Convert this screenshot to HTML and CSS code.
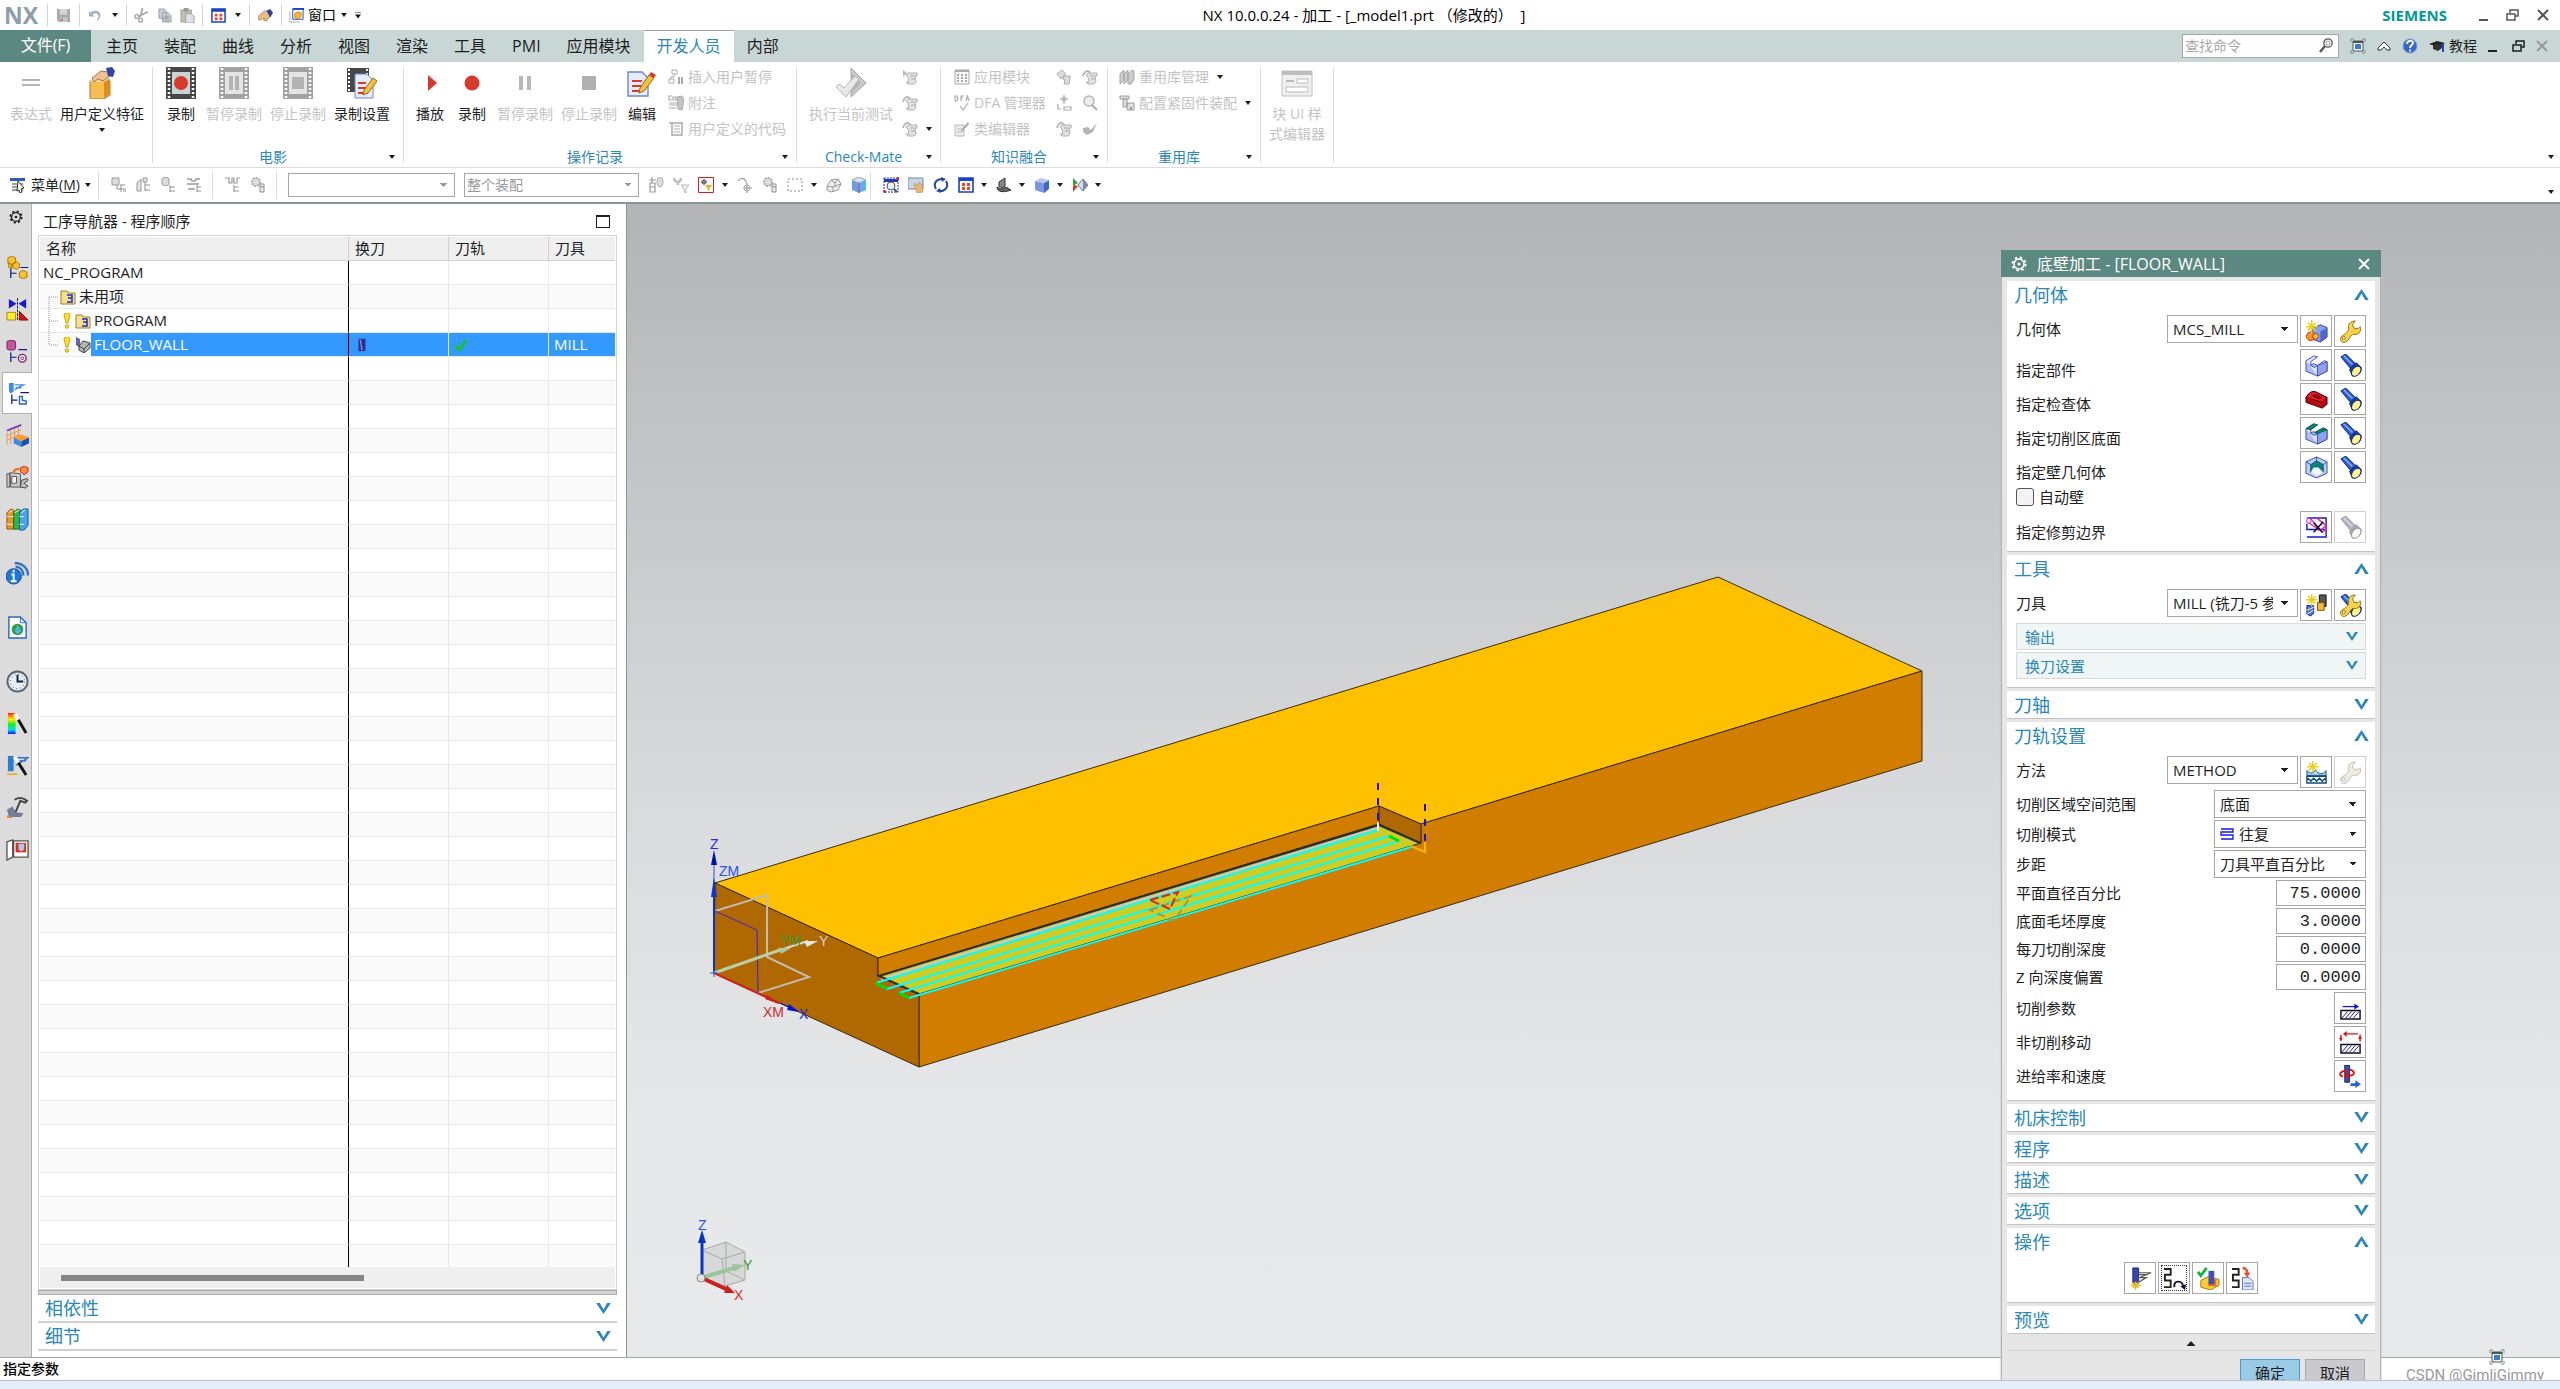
FILE: index.html
```html
<!DOCTYPE html>
<html lang="zh-CN">
<head>
<meta charset="utf-8">
<title>NX 10.0.0.24 - 加工</title>
<link rel="stylesheet" href="styles.css">
</head>
<body>
<svg class="sprite" aria-hidden="true">
  <symbol id="save" viewBox="0 0 16 16"><path d="M1 1h14v14H3l-2-2z" fill="#a9a9ae"/><path d="M4 1h8v6H4z" fill="#d4d4d8"/><path d="M4 10h8v5H4z" fill="#c5c5ca"/><path d="M5 11h2v3H5z" fill="#8b8b90"/></symbol>
  <symbol id="undo" viewBox="0 0 16 16"><path d="M1 3v6h6L5 7c3-3 7-1 6 3l-2 4c6-3 6-12-2-11-2 0-3 1-4 2z" fill="#a9b1bd"/></symbol>
  <symbol id="cut" viewBox="0 0 16 16"><path d="M9 0 7 9M15 4 5 9" stroke="#aaa" stroke-width="2"/><circle cx="3" cy="9" r="2" fill="none" stroke="#aaa" stroke-width="1.5"/><circle cx="7" cy="13" r="2" fill="none" stroke="#aaa" stroke-width="1.5"/></symbol>
  <symbol id="copy" viewBox="0 0 16 16"><path d="M2 1h6l2 3v7H2zM6 5h6l3 3v7H6z" fill="#c9ccd3" stroke="#9b9fa8"/><path d="M8 9h5M8 11h5M8 13h5" stroke="#9b9fa8"/></symbol>
  <symbol id="paste" viewBox="0 0 16 16"><path d="M1 2h11v13H1z" fill="#c3bfb2" stroke="#a4a196"/><path d="M4 0h5v4H4z" fill="#999"/><path d="M6 6h6l3 3v7H6z" fill="#dfe1e5" stroke="#9b9fa8"/></symbol>
  <symbol id="grid" viewBox="0 0 16 16"><path d="M1 1h14v14H1z" fill="#fff" stroke="#1743c4" stroke-width="1.6"/><path d="M1 1h14v3H1z" fill="#1743c4"/><path d="M4 6h3v3H4zM9 6h3v3H9zM4 10h3v3H4zM9 10h3v3H9z" fill="#e8452c"/></symbol>
  <symbol id="hand" viewBox="0 0 16 16"><path d="M0 9 7 3l5 1 1 5-4 5-3-1 1-2-6 2z" fill="#e8bd84" stroke="#9c7442" stroke-width=".7"/><path d="m9 3 4-2 3 4-3 5z" fill="#2b3fa8"/></symbol>
  <symbol id="wincube" viewBox="0 0 16 16"><path d="M1 4v11h11" fill="none" stroke="#555" stroke-dasharray="1 1"/><path d="M4 1h11v11H4z" fill="#fff" stroke="#1743c4"/><path d="M4 0h12v2H4z" fill="#1743c4"/><path d="m6 6 3-2 4 1v4l-3 3-4-2z" fill="#f5b52e" stroke="#b37400" stroke-width=".7"/></symbol>
  <symbol id="restore" viewBox="0 0 13 13"><path d="M4 4V1h8v6H9M1 5h8v6H1z" fill="none" stroke="currentColor" stroke-width="1.5"/></symbol>
  <symbol id="close" viewBox="0 0 12 12"><path d="m1 1 10 10M11 1 1 11" stroke="currentColor" stroke-width="2"/></symbol>
  <symbol id="search" viewBox="0 0 16 16"><circle cx="10" cy="5" r="4.2" fill="none" stroke="#555" stroke-width="1.3"/><circle cx="10" cy="5" r="2" fill="none" stroke="#999"/><path d="m7 8-5 6" stroke="#555" stroke-width="2.4"/></symbol>
  <symbol id="full" viewBox="0 0 16 16"><path d="M1 4V1h3M12 1h3v3M15 12v3h-3M4 15H1v-3" fill="none" stroke="#7d8a88"/><path d="M3 3h10v10H3z" fill="#f4f6f8" stroke="#4a5258"/><path d="M3 3h10v2H3z" fill="#4a5258"/><path d="M5 6h6v5H5z" fill="#3c79c8"/></symbol>
  <symbol id="upup" viewBox="0 0 14 14"><path d="m1 9 6-6 6 6v2h-3L7 8l-3 3H1z" fill="#fff" stroke="#333"/></symbol>
  <symbol id="help" viewBox="0 0 16 16"><circle cx="8" cy="8" r="7" fill="#3566c8" stroke="#7d9cdd"/><path d="M5 6c0-4 6-4 6-1 0 2-3 2-3 5M8 11.500v2" fill="none" stroke="#fff" stroke-width="1.8"/></symbol>
  <symbol id="cap" viewBox="0 0 16 16"><path d="m0 6 8-3 8 2-7 4z" fill="#222"/><path d="M4 7v4l5 2 4-3V6z" fill="#333"/><path d="M14 6v8" stroke="#1730d0" stroke-width="1.8"/></symbol>

  <symbol id="equals" viewBox="0 0 32 32"><path d="M7 12h18v2H7zM7 17h18v2H7z" fill="#b5b5b5"/></symbol>
  <symbol id="userfeat" viewBox="0 0 32 32"><path d="m4 14 15-3 5 3v14l-6 4H4z" fill="#f6bd52" stroke="#b3791d"/><path d="m4 14 5-3h15l-6 4H4z" fill="#fbdc9a"/><path d="m18 15 6-3v15l-6 4z" fill="#d98d1c"/><path d="m6 11 9-7 7 1 2 4-7 5-5-2-4 3z" fill="#edc290" stroke="#a17546"/><path d="m20 1 6-1 3 4-2 6-5-1z" fill="#3442ad"/></symbol>
  <symbol id="film" viewBox="0 0 32 32"><path d="M1 0h30v32H1z" fill="#474747"/><path d="M4 1v30M28 1v30" stroke="#fff" stroke-width="2.500" stroke-dasharray="2 2"/><path d="M7 5h18v22H7z" fill="#c9d4d4"/><circle cx="16" cy="16" r="7" fill="#d8392b"/></symbol>
  <symbol id="filmoff" viewBox="0 0 32 32"><path d="M1 0h30v32H1z" fill="#a2a2a2"/><path d="M4 1v30M28 1v30" stroke="#fff" stroke-width="2.500" stroke-dasharray="2 2"/><path d="M7 5h18v22H7z" fill="#e4e4e4"/></symbol>
  <symbol id="filmpause" viewBox="0 0 32 32"><use href="#filmoff"/><path d="M11 9h4v14h-4zM17 9h4v14h-4z" fill="#b3b3b3"/></symbol>
  <symbol id="filmstop" viewBox="0 0 32 32"><use href="#filmoff"/><path d="M10 10h12v12H10z" fill="#b3b3b3"/></symbol>
  <symbol id="doc" viewBox="0 0 32 32"><path d="M2 5h14l6 6v18H2z" fill="#e6ecfa" stroke="#6f86c9" stroke-width="1.4"/><path d="M6 14h10M6 19h12M6 24h10" stroke="#d8392b" stroke-width="2"/><path d="m14 21 9-13 5 3-10 13-5 2z" fill="#f3c33c" stroke="#8d6a16"/><path d="m23 8 2-3 5 3-2 3z" fill="#d8392b"/></symbol>
  <symbol id="filmset" viewBox="0 0 32 32"><path d="M1 1h22v24H1z" fill="#474747"/><path d="M3 2v22M21 2v6" stroke="#fff" stroke-width="2" stroke-dasharray="2 2"/><path d="M9 7h12l6 6v18H9z" fill="#e6ecfa" stroke="#6f86c9"/><path d="M12 16h8M12 21h9M12 26h9" stroke="#d8392b" stroke-width="2"/><path d="m18 23 9-12 4 3-9 12-5 2z" fill="#f3c33c" stroke="#8d6a16"/></symbol>
  <symbol id="play" viewBox="0 0 32 32"><path d="m14 8 9 8-9 8z" fill="#d8392b"/></symbol>
  <symbol id="rec" viewBox="0 0 32 32"><circle cx="16" cy="16" r="7.500" fill="#d8392b"/></symbol>
  <symbol id="pause" viewBox="0 0 32 32"><path d="M10 9h4v14h-4zM18 9h4v14h-4z" fill="#b8b8b8"/></symbol>
  <symbol id="stop" viewBox="0 0 32 32"><path d="M9 9h14v14H9z" fill="#b0b0b0"/></symbol>
  <symbol id="test" viewBox="0 0 32 32"><path d="m16 1 15 15-15 14z" fill="#c9c9c9" stroke="#a8a8a8"/><path d="M16 6v20l10-10z" fill="#b4b4b4"/><path d="m1 20 3-3 5 4L20 9l4 3-13 18z" fill="#e9e9e9" stroke="#b5b5b5"/></symbol>
  <symbol id="blockui" viewBox="0 0 32 32"><path d="M1 4h30v25H1z" fill="#f0f0f0" stroke="#c2c2c2"/><path d="M1 4h30v4H1z" fill="#bdbdbd"/><path d="M5 14h8" stroke="#bbb" stroke-width="2"/><path d="M16 12h11v4H16zM5 20h22v5H5z" fill="#fff" stroke="#bbb"/></symbol>

  <symbol id="g-pause" viewBox="0 0 16 16"><path d="M4 1h5v4H4zM1 10h5v4H1zM6 5v3H3v2" fill="none" stroke="#aaa"/><path d="M10 8h2v7h-2zM13 8h2v7h-2z" fill="#aaa"/></symbol>
  <symbol id="g-note" viewBox="0 0 16 16"><path d="M4 1H1v4h3M5 2h3v3H5zM1 8h9M1 10h9M1 13h8" fill="none" stroke="#aaa" stroke-width="1.200"/><path d="m9 2 5-1 2 3-2 11-4-1V9z" fill="#c4c4c4" stroke="#aaa"/></symbol>
  <symbol id="g-code" viewBox="0 0 16 16"><path d="M1 2h14M4 2v12h10V2" fill="none" stroke="#aaa" stroke-width="1.500"/><path d="M6 5h6M6 8h6M6 11h6" stroke="#aaa"/></symbol>
  <symbol id="g-run" viewBox="0 0 16 16"><path d="m1 1 4 3-4 4z" fill="#bbb"/><path d="M6 4h9v3h-2l1 6-2 2H6l-2-2h3L6 8 4 6z" fill="#e2e2e2" stroke="#b0b0b0"/><path d="M8 7h4M9 10h4" stroke="#aaa"/></symbol>
  <symbol id="g-up" viewBox="0 0 16 16"><path d="M1 7c2-7 8-6 7-1" fill="none" stroke="#bbb" stroke-width="2"/><path d="M6 4h9v3h-2l1 6-2 2H6l-2-2h3L6 8 4 6z" fill="#e2e2e2" stroke="#b0b0b0"/><path d="M8 7h4M9 10h4" stroke="#aaa"/></symbol>
  <symbol id="g-grid" viewBox="0 0 16 16"><path d="M1 1h14v14H1z" fill="#f6f6f6" stroke="#aaa"/><path d="M1 2h14" stroke="#aaa" stroke-width="2"/><path d="M3 6h2M7 6h2M11 6h2M3 9h2M7 9h2M11 9h2M3 12h2M7 12h2M11 12h2" stroke="#aaa" stroke-width="2"/></symbol>
  <symbol id="g-dfa" viewBox="0 0 16 16"><path d="M1 1v5h2l1-2-1-3zM7 6V1h3M7 3h2M12 6l1.500-5L15 6M6 11l3 4 5-7" fill="none" stroke="#aaa" stroke-width="1.200"/></symbol>
  <symbol id="g-edit" viewBox="0 0 16 16"><path d="M1 4h9v11H1zM3 8h5M3 11h5" fill="#eee" stroke="#b8b8b8"/><path d="m7 9 7-8 1 2-7 8z" fill="#aaa"/></symbol>
  <symbol id="g-tag" viewBox="0 0 16 16"><path d="m1 5 5-4 4 4-5 5z" fill="#ddd" stroke="#b0b0b0"/><path d="M7 7h7v3l-1 5H8l1-4-2-1z" fill="#ddd" stroke="#aaa"/></symbol>
  <symbol id="g-target" viewBox="0 0 16 16"><path d="M8 0v9M4 4h8M2 9v5h3M8 12h7v3H8z" fill="none" stroke="#aaa" stroke-width="1.200"/><circle cx="8" cy="4" r="2" fill="none" stroke="#aaa"/></symbol>
  <symbol id="g-find" viewBox="0 0 16 16"><circle cx="7" cy="6" r="5" fill="#eee" stroke="#b5b5b5" stroke-width="1.500"/><path d="m10 10 5 5" stroke="#aaa" stroke-width="2"/></symbol>
  <symbol id="g-brush" viewBox="0 0 16 16"><path d="m1 7 5-1 3 3 6-7-4 9-6 3-4-3z" fill="#b5b5b5"/></symbol>
  <symbol id="g-books" viewBox="0 0 16 16"><path d="m1 5 4-4v10l-4 4zM5 5l4-4v10l-4 4zM9 5l4-4 2 1v9l-3 4H9z" fill="#ccc" stroke="#a5a5a5"/></symbol>
  <symbol id="g-bolt" viewBox="0 0 16 16"><path d="M1 1h9v3H1zM4 4v8h4V4zM8 8h7v7H8z" fill="#ddd" stroke="#9f9f9f"/><path d="M11 12h2v3h-2z" fill="#999"/></symbol>
  <symbol id="menu" viewBox="0 0 16 16"><path d="M0 1h15v3H0z" fill="#2d5bc0"/><path d="M2 6h12v9H2z" fill="#eee"/><path d="M2 7h11M2 10h11M2 13h11" stroke="#888" stroke-width="1.500"/><path d="m8 4 6 7-3 1 1 3-2 1-1-3-2 1z" fill="#fff" stroke="#333"/></symbol>
  <symbol id="g-tree" viewBox="0 0 16 16"><path d="M1 1h7v7H1z" fill="#ddd" stroke="#999"/><path d="M6 8v4h4M10 7v8M10 8h4M10 12h5M12 14h3" fill="none" stroke="#8f8f8f"/></symbol>
  <symbol id="g-tree2" viewBox="0 0 16 16"><path d="M1 14V6l4-4v12zM7 1h4v4H7z" fill="#e5e5e5" stroke="#999"/><path d="M9 5v9M9 8h5M9 13h5" fill="none" stroke="#8f8f8f"/></symbol>
  <symbol id="g-cyl" viewBox="0 0 16 16"><path d="M1 2c0-2 7-2 7 0v5c0 2-7 2-7 0z" fill="#ddd" stroke="#999"/><path d="M9 8v7M9 10h5M9 14h5" stroke="#8f8f8f"/></symbol>
  <symbol id="g-tool" viewBox="0 0 16 16"><path d="M1 2h4l1 2h3l1-2h4M1 7h12M2 12h7" fill="none" stroke="#999" stroke-width="1.400"/><path d="M11 8v7M11 10h4M11 14h4" stroke="#8f8f8f"/></symbol>
  <symbol id="g-y" viewBox="0 0 16 16"><path d="M0 1h4v5h3V1h2v5h3V1h3M9 8v7M9 10h5M9 14h5" fill="none" stroke="#999" stroke-width="1.200"/></symbol>
  <symbol id="g-gear" viewBox="0 0 16 16"><circle cx="6" cy="5" r="4" fill="#ddd" stroke="#aaa" stroke-dasharray="2 1" stroke-width="2"/><path d="M10 7h4v8h-4zM10 10h4" fill="#eee" stroke="#8f8f8f"/></symbol>
  <symbol id="g-box" viewBox="0 0 16 16"><path d="M2 6h5v9H2zM2 10h5M4 0v6M1 3h7" fill="none" stroke="#999" stroke-width="1.200"/><ellipse cx="12" cy="5" rx="3" ry="5" fill="#ddd" stroke="#aaa"/></symbol>
  <symbol id="g-filter" viewBox="0 0 16 16"><path d="M1 1c0 5 7 5 7 0M5 4v4" fill="none" stroke="#bbb" stroke-width="2.400"/><path d="M8 8h8l-3 4v4l-2-1v-3z" fill="#eee" stroke="#bbb"/></symbol>
  <symbol id="filter" viewBox="0 0 16 16"><path d="M.5.5h15v15H.5z" fill="#fff" stroke="#c22"/><path d="M6 2v6M3 5h6" stroke="#555"/><circle cx="6" cy="5" r="2" fill="none" stroke="#555"/><path d="M7 8h7l-2.500 3v3l-2-1v-2z" fill="#f0a818"/></symbol>
  <symbol id="g-rot" viewBox="0 0 16 16"><path d="M1 4c3-4 8-3 8 2M6 11h9M10 6v10" fill="none" stroke="#999" stroke-width="1.200"/><circle cx="10" cy="11" r="3" fill="none" stroke="#aaa"/></symbol>
  <symbol id="g-dash" viewBox="0 0 16 16"><path d="M1 2h14v12H1z" fill="none" stroke="#888" stroke-dasharray="2 2"/></symbol>
  <symbol id="g-cube" viewBox="0 0 16 16"><path d="m1 9 4-6 7-1 3 5-3 6-7 2-4-2z" fill="#eee" stroke="#999"/><path d="m1 9 6 1 8-3M7 10v5M5 3l4 3 3-4M9 6v4" fill="none" stroke="#999"/></symbol>
  <symbol id="cube2" viewBox="0 0 16 16"><path d="m1 3 7 3v10l-7-3z" fill="#6f9fe0"/><path d="m8 6 7-3v10l-7 3z" fill="#52b4f4"/><path d="m1 3 7-3 7 3-7 3z" fill="#d5e3f5" stroke="#9ab"/><path d="M8 6v10" stroke="#d36"/></symbol>
  <symbol id="zoomfit" viewBox="0 0 16 16"><path d="M1 1h14v14H1z" fill="none" stroke="#1b2fc0" stroke-dasharray="2 1"/><path d="M1 2h14v3H1z" fill="#2438b8"/><circle cx="8" cy="9" r="4" fill="#e9f1f5" stroke="#555"/><path d="m11 12 3 3" stroke="#555" stroke-width="2"/><circle cx="15" cy="1.500" r="1.500" fill="#d22"/><circle cx="1.500" cy="14.500" r="1.500" fill="#d22"/></symbol>
  <symbol id="pan" viewBox="0 0 16 16"><path d="M0 1h15v11H0z" fill="#c9d6e6" stroke="#789"/><path d="m6 8 1-2 3 3 1-4 3 3 1 7-6 1z" fill="#e6b778" stroke="#b98a4a" stroke-width=".6"/></symbol>
  <symbol id="spin" viewBox="0 0 16 16"><path d="M3 12C0 7 3 2 9 2M13 4c3 5 0 10-6 10" fill="none" stroke="#23499c" stroke-width="2"/><path d="m8 0 5 2-4 3zM8 16l-5-2 4-3z" fill="#23499c"/></symbol>
  <symbol id="shade" viewBox="0 0 16 16"><path d="M3 9V5l6-4v8l-3 2z" fill="#888" stroke="#333"/><path d="M1 10c0 5 6 6 14 3l-5-3-4 2c-2 0-3-2-5-2z" fill="#666" stroke="#333"/></symbol>
  <symbol id="bluecube" viewBox="0 0 16 16"><path d="m1 4 9 2v10l-9-3z" fill="#7b97e2"/><path d="m10 6 5-3v9l-5 4z" fill="#4564c6"/><path d="m1 4 6-3 8 2-5 3z" fill="#b5c5f2"/></symbol>
  <symbol id="snap" viewBox="0 0 16 16"><path d="m1 1 5 5-5 3z" fill="#2ca53a"/><path d="m1 8 5 1-5 6z" fill="#d8392b"/><path d="m6 8 5-6 5 6-5 6z" fill="#d7dbe8" stroke="#6c7594"/><path d="m11 2 5 6-5 6z" fill="#7c87ad"/></symbol>

  <symbol id="gear" viewBox="0 0 16 16"><circle cx="8" cy="8" r="5" fill="none" stroke="currentColor" stroke-width="1.500"/><circle cx="8" cy="8" r="6.500" fill="none" stroke="currentColor" stroke-width="2" stroke-dasharray="2.500 2.600"/><circle cx="8" cy="8" r="1.500" fill="currentColor"/></symbol>
  <symbol id="r-asm" viewBox="0 0 24 24"><path d="m2 2 4-2 4 2v5l-4 2-4-2zM2 7l4 2v4l-3-1zM7 8l4-2 3 2v4l-3 2-4-2z" fill="#f7c22f" stroke="#a97800"/><path d="M15 12h8M5 13v10M5 18h6" stroke="#111a80" stroke-width="1.300"/><path d="m14 17 4-2 4 2v5l-4 2-4-2z" fill="#f7c22f" stroke="#a97800"/></symbol>
  <symbol id="r-con" viewBox="0 0 24 24"><path d="m3 1 8 5-8 5zM21 1l-8 5 8 5z" fill="#1818d8"/><path d="M12 0v24" stroke="#222" stroke-dasharray="3 1"/><path d="M1 15h9v8H1z" fill="#ffee2e" stroke="#a80"/><path d="M14 14v9h9z" fill="#d81818" stroke="#700"/></symbol>
  <symbol id="r-part" viewBox="0 0 24 24"><path d="M1 2c0-2 9-2 9 0v7c0 2-9 2-9 0z" fill="#c2559c" stroke="#7a1f5c"/><path d="M13 10h9M5 13v10M5 18h6" stroke="#111a80" stroke-width="1.300"/><circle cx="17" cy="19" r="4" fill="#fff" stroke="#8a2070" stroke-width="1.500"/><circle cx="17" cy="19" r="1.500" fill="none" stroke="#8a2070"/></symbol>
  <symbol id="r-op" viewBox="0 0 24 24"><path d="M2 1h5v9l-3 2-2-2z" fill="#3e8de0"/><path d="M8 8 17 3H8M9 6h6" fill="none" stroke="#3e8de0" stroke-width="1.500"/><path d="M14 11h9M5 13v10M5 19h6" stroke="#111a80" stroke-width="1.300"/><path d="M13 15v8h7v-3l-4-1v-4z" fill="#fff" stroke="#2763c4" stroke-width="1.500"/></symbol>
  <symbol id="r-feat" viewBox="0 0 24 24"><path d="M1 9v13M5 7v14M9 5v14M13 3v12M1 12l15-6M1 17l13-6" stroke="#e9964a" fill="none"/><path d="m1 7 15-6" stroke="#7342b5" stroke-width="2"/><path d="m8 14 8-3 8 3-8 4z" fill="#ff9d28"/><path d="m8 14 8 4v6l-8-4z" fill="#3b8be0"/><path d="m16 18 8-4v6l-8 4z" fill="#1a4fb0"/></symbol>
  <symbol id="r-mach" viewBox="0 0 24 24"><path d="M1 8h3v14H1zM4 7l11 1v14H5z" fill="#c8c8c8" stroke="#555"/><path d="M6 11h5v7H6z" fill="#f4f4f4" stroke="#555"/><path d="m16 15 6-2 1 2-4 3 4 3-3 2-5-1z" fill="#bbb" stroke="#444"/><path d="m15 2 4-2 4 2v4l-4 3-4-3z" fill="#fd8d3c" stroke="#b22"/><path d="M14 3c-4 0-6 2-6 4" fill="none" stroke="#f07020" stroke-width="2.500"/></symbol>
  <symbol id="r-books" viewBox="0 0 24 24"><path d="m1 5 4-4 3 1v20H1z" fill="#f09226" stroke="#9a5200"/><path d="m8 5 4-4 3 1v20H8z" fill="#2dbb3c" stroke="#0b6b15"/><path d="m14 5 4-4h5v17l-4 5h-5z" fill="#4aa2ea" stroke="#125a9c"/><path d="M3 5l4-3M9 5l5-3M16 5l4-3M1 9h7M14 9h5M1 17h6M14 17h5" stroke="#fff"/></symbol>
  <symbol id="r-info" viewBox="0 0 24 24"><circle cx="8" cy="15" r="8" fill="#1f77d8" stroke="#0d4a9c"/><path d="M8 8v3M5.500 13H8v7M5 20h6" stroke="#fff" stroke-width="2" fill="none"/><path d="M10 5c5 0 8 4 8 9M9 1c8 0 14 5 14 13" fill="none" stroke="#3571c8" stroke-width="2.500"/></symbol>
  <symbol id="r-web" viewBox="0 0 24 24"><path d="M3 1h12l6 6v16H3z" fill="#fff" stroke="#2867c6" stroke-width="1.500"/><path d="M15 1v6h6" fill="none" stroke="#2867c6"/><circle cx="12" cy="14" r="6" fill="#2da03a"/><path d="m12 9 4 7-4 3-3-3z" fill="#4fb4ee"/></symbol>
  <symbol id="r-clock" viewBox="0 0 24 24"><circle cx="12" cy="12" r="10.500" fill="#e4effa" stroke="#5c656e" stroke-width="2"/><circle cx="12" cy="12" r="7.500" fill="none" stroke="#345" stroke-dasharray="1 3"/><path d="M12 5v7h6" fill="none" stroke="#123" stroke-width="2"/></symbol>
  <linearGradient id="spec" x2="0" y2="1"><stop stop-color="#f20"/><stop offset=".3" stop-color="#fe0"/><stop offset=".55" stop-color="#1e2"/><stop offset=".8" stop-color="#0de"/><stop offset="1" stop-color="#11f"/></linearGradient>
  <symbol id="r-spec" viewBox="0 0 24 24"><path d="M2 1h8v22H2z" fill="url(#spec)"/><path d="m11 5 10 17" stroke="#111" stroke-width="3"/><path d="m9 2 4 6" stroke="#fff" stroke-width="4"/></symbol>
  <symbol id="r-wiz" viewBox="0 0 24 24"><path d="M2 2h6v16H2z" fill="#2c7fd0"/><path d="M10 12 23 4H10M9 7h12" fill="none" stroke="#3571c8" stroke-width="1.500"/><path d="m11 6 10 16" stroke="#111" stroke-width="3"/><path d="m9 3 4 6" stroke="#fff" stroke-width="4"/><path d="M1 21h11" stroke="#e9b52a" stroke-width="2"/></symbol>
  <symbol id="r-hammer" viewBox="0 0 24 24"><path d="M9 4c4-3 8-3 13 1l-2 2-5-2-6 14" fill="none" stroke="#444" stroke-width="2"/><path d="m1 14 6-3 3 6 8 1-2 4H3z" fill="#777b98"/><path d="m1 20 6 3H1z" fill="#f08a20"/></symbol>
  <symbol id="r-role" viewBox="0 0 24 24"><path d="m1 4 6-2v18l-6 3zM8 3h15v17H8z" fill="#fff" stroke="#555" stroke-width="1.400"/><path d="M10 5h11v10H10z" fill="#e32d1c"/><path d="M13 6h6v6l-3 2-3-2z" fill="#a6c8ee"/></symbol>

  <symbol id="t-folder" viewBox="0 0 16 16"><path d="M1 2h6l1 2h7v11H1z" fill="#f7e08a" stroke="#9b8129"/><path d="M7 6h5v3H8M12 9v4H7" fill="none" stroke="#1530d0" stroke-width="1.500"/></symbol>
  <symbol id="t-warn" viewBox="0 0 8 16"><path d="M1 2c0-3 6-3 6 0L5 10H3z" fill="#ffe11f" stroke="#a98a00" stroke-width=".7"/><circle cx="4" cy="13.500" r="1.800" fill="#ffe11f" stroke="#a98a00" stroke-width=".7"/></symbol>
  <symbol id="t-mill" viewBox="0 0 16 16"><path d="m1 0 4 2v9l-4-3z" fill="#5f69a6"/><path d="m4 9 4-5 7 2v5l-6 5-5-3z" fill="#b5b5b5" stroke="#444"/><path d="m4 9 5 3 6-6M9 12v4" fill="none" stroke="#444"/></symbol>
  <symbol id="t-cutter" viewBox="0 0 8 16"><path d="M0 1h8v14H0z" fill="#2b3192"/><path d="m2 2 2 12" stroke="#8d97d8" stroke-width="1.500"/></symbol>
  <symbol id="t-ok" viewBox="0 0 12 14"><path d="m1 7 3 5L11 2" fill="none" stroke="#18c03a" stroke-width="3"/></symbol>

  <symbol id="down" viewBox="0 0 16 12"><path d="m0 0h4l4 7 4-7h4l-8 12z" fill="#2a87b8"/></symbol>
  <symbol id="up" viewBox="0 0 16 12"><path d="m0 12h4l4-7 4 7h4l-8-12z" fill="#2a87b8"/></symbol>

  <symbol id="d-geo" viewBox="0 0 24 24"><path d="m8 9 8-4 7 3v10l-7 5-8-3z" fill="#86a0f0" stroke="#2a3b9a"/><path d="M16 12v11l7-5V8z" fill="#4c66d4"/><circle cx="6" cy="17" r="4.500" fill="#ff9130" stroke="#b30"/><circle cx="11" cy="17" r="3" fill="#ffc04a" stroke="#b30"/><path d="M7 0v14M1 7h12M3 3l8 8M11 3l-8 8" stroke="#e8cf1a" stroke-width="1.600"/></symbol>
  <symbol id="d-wrench" viewBox="0 0 24 24"><path d="M10 9c-1-5 2-8 7-8l-3 4 2 4 4 0 2-2c2 5-2 9-7 8-3 0-4 6-8 8-3 2-7-2-5-5 2-3 8-4 8-9z" fill="#f9d44a" stroke="#8f6f10"/><circle cx="5" cy="19" r="1.600" fill="#fff" stroke="#8f6f10"/></symbol>
  <symbol id="d-torch" viewBox="0 0 24 24"><path d="m2 3 5-3 10 10-5 5z" fill="#2b5fd8" stroke="#10246e"/><path d="m11 16 7-7 5 5c1 6-4 9-9 9z" fill="#173fae" stroke="#10246e"/><ellipse cx="18" cy="18" rx="6" ry="4" transform="rotate(-50 18 18)" fill="#fff58a" stroke="#10246e"/><path d="m5 2 9 9" stroke="#8db2ff" stroke-width="1.500"/></symbol>
  <symbol id="d-part" viewBox="0 0 24 24"><path d="M1 7v11l12 5V12l-4-2-4 2V8z" fill="#aebcf6" stroke="#3d4fb8"/><path d="m1 7 8-5 4 1-7 5v4l4 2 3-2 7-5 3 1v10l-10 5" fill="#dfe5fe" stroke="#3d4fb8"/><path d="m13 12 10-4v10l-10 5z" fill="#8ea1ee" stroke="#3d4fb8"/></symbol>
  <symbol id="d-check" viewBox="0 0 24 24"><path d="M1 10c3-5 6-7 10-6l12 6v7l-5 4L1 15z" fill="#b80a14" stroke="#500"/><path d="M1 10c3-5 6-7 10-6l12 6-5 5z" fill="#e11c26" stroke="#500"/><path d="m8 8 4-1 5 3-3 1z" fill="#b80a14" stroke="#500"/></symbol>
  <symbol id="d-floor" viewBox="0 0 24 24"><use href="#d-part"/><path d="m1 7 8-5 4 1-7 5zM10 11l9-5 4 2-10 4z" fill="#0b8080" stroke="#064"/></symbol>
  <symbol id="d-wall" viewBox="0 0 24 24"><path d="m1 6 11-5 11 5v12l-11 5-11-5z" fill="#b9cdf5" stroke="#3d4fb8"/><path d="m6 9 6-4 7 4v8l-4-4H9l-3 4z" fill="#0b8080" stroke="#064"/><path d="m6 17 3-5h5l5 5-7 4z" fill="#eef5ff"/><path d="M12 1v4M1 6l5 3M23 6l-4 3" stroke="#3d4fb8"/></symbol>
  <symbol id="d-trim" viewBox="0 0 24 24"><path d="M2 2h20v20H2M2 8v6h20" fill="none" stroke="#1818c8" stroke-width="1.500"/><path d="m2 6 14 9 6-5L12 2M6 3l12 14 5-4" fill="none" stroke="#e028c8" stroke-width="1.500"/><circle cx="4" cy="5" r="2.500" fill="#fff" stroke="#e028c8"/><path d="m9 7 9 10M19 6 9 17" stroke="#111" stroke-width="1.600"/></symbol>
  <symbol id="d-newtool" viewBox="0 0 24 24"><path d="M2 12h7v8l-3 3-4-2z" fill="#4a72d8" stroke="#15308a"/><path d="m2 17 7-3M2 21l7-4" stroke="#fff"/><path d="M15 1h7v12h-7z" fill="#555" stroke="#111"/><path d="M13 9h7v8h-7z" fill="#f6b73a" stroke="#804d00"/><path d="M7 0v13M1 6h12M3 2l8 8M11 2l-8 8" stroke="#e8cf1a" stroke-width="1.500"/></symbol>
  <symbol id="d-edittool" viewBox="0 0 24 24"><use href="#d-torch"/><use href="#d-wrench"/></symbol>
  <symbol id="d-method" viewBox="0 0 24 24"><path d="M2 10c4 4 7 3 9-1 3 6 8 5 11 1v5H2z" fill="#a9d8f5" stroke="#1a5580"/><path d="M2 16h20v7H2zM3 18l3 3 3-3 3 3 3-3 3 3 3-3" fill="#fff" stroke="#154a76" stroke-width="1.500"/><path d="M8 0v12M2 6h12M4 2l8 8M12 2l-8 8" stroke="#e8cf1a" stroke-width="1.400"/></symbol>
  <symbol id="d-zig" viewBox="0 0 14 12"><path d="M1 1h12v3H1v3h12v4H1" fill="none" stroke="#1414e6" stroke-width="1.300"/></symbol>
  <symbol id="d-hatch" viewBox="0 0 24 24"><path d="M2 14h20v9H2z" fill="#fff" stroke="#111" stroke-width="1.500"/><path d="m3 22 6-7M7 22l6-7M11 22l6-7M15 22l6-7" stroke="#1a1a99"/></symbol>
  <symbol id="d-cut" viewBox="0 0 24 24"><use href="#d-hatch"/><path d="M4 10h14" stroke="#1414c8" stroke-width="1.300"/><path d="m16 7 5 3-5 3z" fill="#1414c8"/></symbol>
  <symbol id="d-noncut" viewBox="0 0 24 24"><use href="#d-hatch"/><path d="M2 10V4M6 3h14M22 11V6" stroke="#d01818" stroke-width="1.500"/><path d="m0 7 2 4 2-4zM8 0 4 3l4 3zM20 8l2-5 2 5z" fill="#d01818"/></symbol>
  <symbol id="d-feed" viewBox="0 0 24 24"><path d="M6 0h5v18H6z" fill="#3b4ba8" stroke="#222c70"/><path d="M8 6C1 6-1 11 4 12M11 5c6 1 6 6 0 6" fill="none" stroke="#d01818" stroke-width="2"/><path d="m10 7 0 8-5-4z" fill="#d01818"/><path d="M12 19h5v-3l6 4-6 4v-2h-5z" fill="#2b5fd8"/></symbol>
  <symbol id="d-gen" viewBox="0 0 24 24"><path d="M4 1h6v16H4z" fill="#3345b0" stroke="#1c276e"/><path d="M10 6h13L11 11h7l-8 5M10 8h10" fill="none" stroke="#555" stroke-width="1.300"/><path d="m7 15 0 9M2 19h10M4 16l6 6M10 16l-6 6" stroke="#e8b81a" stroke-width="1.400"/></symbol>
  <symbol id="d-zz" viewBox="0 0 24 24"><path d="M1 2h7v6H2v6h6v7H1" fill="none" stroke="#222" stroke-width="2"/></symbol>
  <symbol id="d-replay" viewBox="0 0 24 24"><use href="#d-zz"/><path d="M12 21c-2-7 8-8 9-1" fill="none" stroke="#101038" stroke-width="2"/><path d="m24 18-1 6-5-4z" fill="#101038"/></symbol>
  <symbol id="d-verify" viewBox="0 0 24 24"><path d="m4 14 8-4 11 3v6l-9 5-10-3z" fill="#f9cf2f" stroke="#a07800"/><path d="M12 13h8v7h-8z" fill="#f0642c"/><path d="M12 4h6v14h-6z" fill="#4050b8"/><path d="m1 5 3 4 6-8" fill="none" stroke="#18b83a" stroke-width="3"/></symbol>
  <symbol id="d-list" viewBox="0 0 24 24"><use href="#d-zz"/><path d="M12 11h7l4 4v9H12z" fill="#dde6fb" stroke="#5c74bd"/><path d="M14 17h7M14 20h7" stroke="#5c74bd"/><path d="M12 1c4 0 5 3 5 6" fill="none" stroke="#e8502c" stroke-width="2.500"/><path d="M13 6h7l-3 5z" fill="#e8502c"/></symbol>
</svg>

<div class="app">
  <header class="titlebar">
    <span class="logo">NX</span>
    <div class="quick">
      <button class="q" aria-label="保存"><svg><use href="#save"/></svg></button>
      <button class="q" aria-label="撤销"><svg><use href="#undo"/></svg><i class="dd"></i></button>
      <div class="q three"><button aria-label="剪切"><svg><use href="#cut"/></svg></button><button aria-label="复制"><svg><use href="#copy"/></svg></button><button aria-label="粘贴"><svg><use href="#paste"/></svg></button></div>
      <button class="q" aria-label="布局"><svg><use href="#grid"/></svg><i class="dd"></i></button>
      <button class="q" aria-label="触控"><svg><use href="#hand"/></svg></button>
      <button class="q win"><svg><use href="#wincube"/></svg><span>窗口</span><i class="dd"></i><i class="dd bar"></i></button>
    </div>
    <h1>NX 10.0.0.24 - 加工 - [_model1.prt （修改的）&nbsp; ]</h1>
    <div class="wincontrols">
      <span class="brand">SIEMENS</span>
      <button class="min" aria-label="最小化"></button>
      <button aria-label="还原"><svg class="s13"><use href="#restore"/></svg></button>
      <button aria-label="关闭"><svg class="s12"><use href="#close"/></svg></button>
    </div>
  </header>

  <nav class="tabs">
    <a class="file" href="#">文件(F)</a>
    <a href="#">主页</a><a href="#">装配</a><a href="#">曲线</a><a href="#">分析</a><a href="#">视图</a><a href="#">渲染</a><a href="#">工具</a><a href="#">PMI</a><a href="#">应用模块</a><a class="on" href="#">开发人员</a><a href="#">内部</a>
    <div class="tabright">
      <label class="find"><input type="text" placeholder="查找命令" aria-label="查找命令"><svg><use href="#search"/></svg></label>
      <button aria-label="全屏"><svg><use href="#full"/></svg></button>
      <button aria-label="折叠"><svg class="s14"><use href="#upup"/></svg></button>
      <button aria-label="帮助"><svg><use href="#help"/></svg></button>
      <button class="tut"><svg><use href="#cap"/></svg>教程</button>
      <button class="min" aria-label="最小化"></button>
      <button aria-label="还原"><svg class="s13"><use href="#restore"/></svg></button>
      <button class="dim" aria-label="关闭"><svg class="s12"><use href="#close"/></svg></button>
    </div>
  </nav>

  <section class="ribbon">
    <div class="group g1"><div class="tools">
      <button class="big off"><svg><use href="#equals"/></svg>表达式</button>
      <button class="big"><svg><use href="#userfeat"/></svg>用户定义特征<i class="dd"></i></button>
    </div></div>
    <div class="group g2"><div class="tools">
      <button class="big"><svg><use href="#film"/></svg>录制</button>
      <button class="big off"><svg><use href="#filmpause"/></svg>暂停录制</button>
      <button class="big off"><svg><use href="#filmstop"/></svg>停止录制</button>
      <button class="big"><svg><use href="#filmset"/></svg>录制设置</button>
    </div><div class="foot"><span>电影</span><i class="dd"></i></div></div>
    <div class="group g3"><div class="tools">
      <button class="big"><svg><use href="#play"/></svg>播放</button>
      <button class="big"><svg><use href="#rec"/></svg>录制</button>
      <button class="big off"><svg><use href="#pause"/></svg>暂停录制</button>
      <button class="big off"><svg><use href="#stop"/></svg>停止录制</button>
      <button class="big"><svg><use href="#doc"/></svg>编辑</button>
      <div class="col first">
        <button><svg><use href="#g-pause"/></svg>插入用户暂停</button>
        <button><svg><use href="#g-note"/></svg>附注</button>
        <button><svg><use href="#g-code"/></svg>用户定义的代码</button>
      </div>
    </div><div class="foot"><span>操作记录</span><i class="dd"></i></div></div>
    <div class="group g4"><div class="tools">
      <button class="big off"><svg><use href="#test"/></svg>执行当前测试</button>
      <div class="col">
        <button aria-label="运行"><svg><use href="#g-run"/></svg></button>
        <button aria-label="上传"><svg><use href="#g-up"/></svg></button>
        <button aria-label="选项"><svg><use href="#g-up"/></svg><i class="dd"></i></button>
      </div>
    </div><div class="foot"><span>Check-Mate</span><i class="dd"></i></div></div>
    <div class="group g5"><div class="tools">
      <div class="col">
        <button><svg><use href="#g-grid"/></svg>应用模块</button>
        <button><svg><use href="#g-dfa"/></svg>DFA 管理器</button>
        <button><svg><use href="#g-edit"/></svg>类编辑器</button>
      </div>
      <div class="col icons">
        <button aria-label="属性"><svg><use href="#g-tag"/></svg></button>
        <button aria-label="定位"><svg><use href="#g-target"/></svg></button>
        <button aria-label="标记"><svg><use href="#g-up"/></svg></button>
      </div>
      <div class="col icons">
        <button aria-label="刷新"><svg><use href="#g-up"/></svg></button>
        <button aria-label="检查"><svg><use href="#g-find"/></svg></button>
        <button aria-label="清理"><svg><use href="#g-brush"/></svg></button>
      </div>
    </div><div class="foot"><span>知识融合</span><i class="dd"></i></div></div>
    <div class="group g6"><div class="tools">
      <div class="col">
        <button><svg><use href="#g-books"/></svg>重用库管理<i class="dd"></i></button>
        <button><svg><use href="#g-bolt"/></svg>配置紧固件装配<i class="dd"></i></button>
      </div>
    </div><div class="foot"><span>重用库</span><i class="dd"></i></div></div>
    <div class="group g7"><div class="tools">
      <button class="big off"><svg><use href="#blockui"/></svg>块 UI 样<br>式编辑器</button>
    </div></div>
    <i class="dd more"></i>
  </section>

  <section class="toolbar">
    <button class="menubtn"><svg><use href="#menu"/></svg><span>菜单(<u>M</u>)</span><i class="dd"></i></button>
    <div class="set s1">
      <button aria-label="创建程序"><svg><use href="#g-tree"/></svg></button><button aria-label="创建刀具"><svg><use href="#g-tree2"/></svg></button><button aria-label="创建几何体"><svg><use href="#g-cyl"/></svg></button><button aria-label="创建工序"><svg><use href="#g-tool"/></svg></button>
    </div>
    <div class="set s2">
      <button aria-label="生成"><svg><use href="#g-y"/></svg></button><button aria-label="确认"><svg><use href="#g-gear"/></svg></button>
    </div>
    <div class="set s3">
      <select class="tsel" aria-label="类型过滤器" disabled><option></option></select>
      <select class="tsel wide" aria-label="选择范围" disabled><option>整个装配</option></select>
      <button aria-label="选择意图"><svg><use href="#g-box"/></svg></button><button aria-label="过滤"><svg><use href="#g-filter"/></svg></button>
      <button aria-label="捕捉过滤"><svg><use href="#filter"/></svg><i class="dd"></i></button>
      <button aria-label="旋转"><svg><use href="#g-rot"/></svg></button><button aria-label="关联"><svg><use href="#g-gear"/></svg></button>
      <button aria-label="框选"><svg><use href="#g-dash"/></svg><i class="dd"></i></button>
      <button aria-label="体"><svg><use href="#g-cube"/></svg></button><button aria-label="面"><svg><use href="#cube2"/></svg></button>
    </div>
    <div class="set s4">
      <button aria-label="适合窗口"><svg><use href="#zoomfit"/></svg></button><button aria-label="平移"><svg><use href="#pan"/></svg></button><button aria-label="旋转视图"><svg><use href="#spin"/></svg></button>
      <button aria-label="视图布局"><svg><use href="#grid"/></svg><i class="dd"></i></button>
      <button aria-label="剖切"><svg><use href="#shade"/></svg><i class="dd"></i></button>
      <button aria-label="着色"><svg><use href="#bluecube"/></svg><i class="dd"></i></button>
      <button aria-label="方位"><svg><use href="#snap"/></svg><i class="dd"></i></button>
    </div>
    <i class="dd more"></i>
  </section>

  <div class="desk">
    <main class="workspace">
      <nav class="rail">
        <button class="cog" aria-label="设置"><svg><use href="#gear"/></svg></button>
        <button aria-label="装配导航器"><svg><use href="#r-asm"/></svg></button>
        <button aria-label="约束导航器"><svg><use href="#r-con"/></svg></button>
        <button aria-label="部件导航器"><svg><use href="#r-part"/></svg></button>
        <button class="on" aria-label="工序导航器"><svg><use href="#r-op"/></svg></button>
        <button aria-label="加工特征导航器"><svg><use href="#r-feat"/></svg></button>
        <button aria-label="机床导航器"><svg><use href="#r-mach"/></svg></button>
        <button aria-label="重用库"><svg><use href="#r-books"/></svg></button>
        <button class="gap" aria-label="HD3D 工具"><svg><use href="#r-info"/></svg></button>
        <button class="gap" aria-label="浏览器"><svg><use href="#r-web"/></svg></button>
        <button class="gap" aria-label="历史记录"><svg><use href="#r-clock"/></svg></button>
        <button aria-label="系统材料"><svg><use href="#r-spec"/></svg></button>
        <button aria-label="加工向导"><svg><use href="#r-wiz"/></svg></button>
        <button aria-label="过程工作室"><svg><use href="#r-hammer"/></svg></button>
        <button aria-label="角色"><svg><use href="#r-role"/></svg></button>
      </nav>

      <aside class="navigator">
        <div class="navhead"><h2>工序导航器 - 程序顺序</h2><button class="max" aria-label="最大化"></button></div>
        <div class="gridbox">
          <div class="rows">
          <table>
            <colgroup><col class="c1"><col class="c2"><col class="c2"><col></colgroup>
            <thead><tr><th>名称</th><th>换刀</th><th>刀轨</th><th>刀具</th></tr></thead>
            <tbody>
              <tr><td class="root">NC_PROGRAM</td><td></td><td></td><td></td></tr>
              <tr><td><div class="node"><svg class="branch" viewBox="0 0 20 24"><path d="M9 12v12M9 12h9"/></svg><svg><use href="#t-folder"/></svg><span>未用项</span></div></td><td></td><td></td><td></td></tr>
              <tr><td><div class="node"><svg class="branch" viewBox="0 0 20 24"><path d="M9 0v24M9 12h9"/></svg><svg class="warn"><use href="#t-warn"/></svg><svg><use href="#t-folder"/></svg><span>PROGRAM</span></div></td><td></td><td></td><td></td></tr>
              <tr class="sel"><td><div class="node"><svg class="branch" viewBox="0 0 20 24"><path d="M9 0v12M9 12h9"/></svg><svg class="warn"><use href="#t-warn"/></svg><svg><use href="#t-mill"/></svg><span>FLOOR_WALL</span></div></td><td><svg class="cutter"><use href="#t-cutter"/></svg></td><td><svg class="ok"><use href="#t-ok"/></svg></td><td class="mill">MILL</td></tr>
              <tr><td><td><td><td><tr><td><td><td><td><tr><td><td><td><td><tr><td><td><td><td><tr><td><td><td><td><tr><td><td><td><td>
              <tr><td><td><td><td><tr><td><td><td><td><tr><td><td><td><td><tr><td><td><td><td><tr><td><td><td><td><tr><td><td><td><td>
              <tr><td><td><td><td><tr><td><td><td><td><tr><td><td><td><td><tr><td><td><td><td><tr><td><td><td><td><tr><td><td><td><td>
              <tr><td><td><td><td><tr><td><td><td><td><tr><td><td><td><td><tr><td><td><td><td><tr><td><td><td><td><tr><td><td><td><td>
              <tr><td><td><td><td><tr><td><td><td><td><tr><td><td><td><td><tr><td><td><td><td><tr><td><td><td><td><tr><td><td><td><td>
              <tr><td><td><td><td><tr><td><td><td><td><tr><td><td><td><td><tr><td><td><td><td><tr><td><td><td><td><tr><td><td><td><td>
              <tr><td><td><td><td><tr><td><td><td><td>
            </tbody>
          </table>
          </div>
          <div class="hscroll"><i></i></div>
        </div>
        <div class="splitter"></div>
        <button class="fold">相依性<svg class="chev"><use href="#down"/></svg></button>
        <button class="fold">细节<svg class="chev"><use href="#down"/></svg></button>
      </aside>

      <div class="viewport">
        <svg viewBox="627 204 1933 1153" preserveAspectRatio="xMinYMin meet" class="scene">
          <g stroke="#3a2c10" stroke-width="1" stroke-linejoin="round">
            <path d="M715 883 1718 577 1922 671 1421 824 1379 806 878 958z" fill="#ffc000"/>
            <path d="M919 1067 1922 761V671L1421 824V843L919 994z" fill="#d17d00"/>
            <path d="M715 883 878 958V976L919 994V1067L714 973z" fill="#b06800"/>
            <path d="M878 958 1379 806V824L878 976z" fill="#d17d00"/>
            <path d="M1379 806 1421 824V843L1379 824z" fill="#b06800"/>
            <path d="M879 976 1379 824 1421 843 919 994z" fill="#cdcd26"/>
          </g>
          <path d="m881 979 499-152" stroke="#c9c9c9" stroke-width="2"/>
          <path d="m919 994-40-18 500-151 41 18" fill="none" stroke="#2e2e2e" stroke-width="2"/>
          <g fill="none" stroke="#00ffff" stroke-width="2"><path d="m876 983 502-153M887 989l502-153M899 993l500-152M909 998l502-151"/></g>
          <path d="m876 983 11 6M899 993l10 5M1389 836l10 5" stroke="#00e000" stroke-width="3"/>
          <path d="m1411 846 14 6v-10" fill="none" stroke="#ffb400" stroke-width="2"/>
          <path d="M1378 783v39M1425 804v39" stroke="#1a10d8" stroke-width="2" stroke-dasharray="7 8"/>
          <path d="M1378 822v9" stroke="#eee" stroke-width="2"/>
          <g fill="none" stroke-width="2"><path d="m1150 910 41-14-17 25z" stroke="#a39a3c" stroke-dasharray="8 4"/><path d="m1150 900 28-8-4 8-4 9-20-9" stroke="#d32a1e" stroke-dasharray="9 3"/></g>
          <path d="m715 911 52-16v62l42 20-51 16" fill="none" stroke="#c4b9b0" stroke-width="2"/>
          <path d="m715 911 42 19 1 63" fill="none" stroke="#3a20e0"/>
          <path d="M714 855v118" stroke="#3355dd"/><path d="M714 895v78" stroke="#0a30c8" stroke-width="2"/>
          <path d="m711 865 3-15 3 15z" fill="#0010b0"/><path d="m711 897 3-20 3 20z" fill="#0a38c8"/>
          <path d="m714 973 66-23" stroke="#b9cfa8" stroke-width="3"/><path d="m780 950 28-9" stroke="#d8d8d8" stroke-width="2"/>
          <path d="m778 948 13 0-10 6z" fill="#a8c8a0"/><path d="m804 941 14 0-11 6z" fill="#e6e6e6"/>
          <path d="m714 973 65 30" stroke="#cc2020" stroke-width="2"/><path d="m780 1003 18 8" stroke="#0a10d0"/>
          <path d="m767 995-2 4 14 5z" fill="#cc2020"/><path d="m789 1004-2 6 12 2z" fill="#0a10d0"/>
          <path d="M710 973h8M714 969v8" stroke="#3355dd"/>
          <g class="axis"><text x="710" y="849" fill="#2a2ad8">Z</text><text x="719" y="876" fill="#2a52f0">ZM</text><text x="780" y="945" fill="#3c9a34">YM</text><text x="819" y="946" fill="#d0d0d0">Y</text><text x="763" y="1017" fill="#cc2b2b">XM</text><text x="799" y="1019" fill="#2222e0">X</text></g>
          <g stroke="#a8a8a8" fill="#d0d0d0" fill-opacity=".7"><path d="m702 1250 24-8 19 10v28l-20 6-23-9z"/><path d="m702 1250 20 9 23-7M722 1259l3 27M726 1242v29l19 9M726 1271l-24 7" fill="none"/></g>
          <path d="m704 1277 30-9" stroke="#9dc49a" stroke-width="4"/><path d="m732 1264 13 1-11 7z" fill="#9dc49a"/>
          <path d="M702 1240v36" stroke="#0a35c0" stroke-width="3"/><path d="m698 1243 4-13 4 13z" fill="#0a35c0"/>
          <path d="m704 1279 22 10" stroke="#cc2020" stroke-width="4"/><path d="m727 1285-3 8 11 0z" fill="#cc2020"/>
          <circle cx="701" cy="1278" r="4" fill="#e4e4e4" stroke="#888"/>
          <g class="axis"><text x="698" y="1230" fill="#2a52f0">Z</text><text x="743" y="1270" fill="#2c9a2c">Y</text><text x="734" y="1300" fill="#d03030">X</text></g>
        </svg>
      </div>
    </main>

    <footer class="status"><span>指定参数</span><span class="mark">CSDN @GimliGimmy<svg><use href="#full"/></svg></span></footer>

    <form class="dialog">
      <header><svg><use href="#gear"/></svg><h2>底壁加工 - [FLOOR_WALL]</h2><button type="button" aria-label="关闭"><svg class="s12"><use href="#close"/></svg></button></header>
      <div class="body">
        <section class="open">
          <h3>几何体<svg class="chev"><use href="#up"/></svg></h3>
          <div class="row top"><label for="geo">几何体</label><select id="geo" class="w131"><option>MCS_MILL</option></select><button type="button" class="ib" aria-label="新建几何体"><svg><use href="#d-geo"/></svg></button><button type="button" class="ib" aria-label="编辑"><svg><use href="#d-wrench"/></svg></button></div>
          <div class="row low"><span>指定部件</span><button type="button" class="ib" aria-label="选择部件"><svg><use href="#d-part"/></svg></button><button type="button" class="ib" aria-label="显示"><svg><use href="#d-torch"/></svg></button></div>
          <div class="row low"><span>指定检查体</span><button type="button" class="ib" aria-label="选择检查体"><svg><use href="#d-check"/></svg></button><button type="button" class="ib" aria-label="显示"><svg><use href="#d-torch"/></svg></button></div>
          <div class="row low"><span>指定切削区底面</span><button type="button" class="ib" aria-label="选择底面"><svg><use href="#d-floor"/></svg></button><button type="button" class="ib" aria-label="显示"><svg><use href="#d-torch"/></svg></button></div>
          <div class="row low"><span>指定壁几何体</span><button type="button" class="ib" aria-label="选择壁"><svg><use href="#d-wall"/></svg></button><button type="button" class="ib" aria-label="显示"><svg><use href="#d-torch"/></svg></button></div>
          <label class="check"><input type="checkbox">自动壁</label>
          <div class="row low"><span>指定修剪边界</span><button type="button" class="ib" aria-label="选择边界"><svg><use href="#d-trim"/></svg></button><button type="button" class="ib" disabled aria-label="显示"><svg><use href="#d-torch"/></svg></button></div>
        </section>
        <section class="open">
          <h3>工具<svg class="chev"><use href="#up"/></svg></h3>
          <div class="row top"><label for="tool">刀具</label><select id="tool" class="w131"><option>MILL (铣刀-5 参数)</option></select><button type="button" class="ib" aria-label="新建刀具"><svg><use href="#d-newtool"/></svg></button><button type="button" class="ib" aria-label="编辑刀具"><svg><use href="#d-edittool"/></svg></button></div>
          <button type="button" class="sub">输出<svg class="chev"><use href="#down"/></svg></button>
          <button type="button" class="sub">换刀设置<svg class="chev"><use href="#down"/></svg></button>
        </section>
        <section><h3>刀轴<svg class="chev"><use href="#down"/></svg></h3></section>
        <section class="open">
          <h3>刀轨设置<svg class="chev"><use href="#up"/></svg></h3>
          <div class="row top"><label for="method">方法</label><select id="method" class="w131"><option>METHOD</option></select><button type="button" class="ib" aria-label="新建方法"><svg><use href="#d-method"/></svg></button><button type="button" class="ib" disabled aria-label="编辑"><svg><use href="#d-wrench"/></svg></button></div>
          <div class="row"><label for="range">切削区域空间范围</label><select id="range" class="w152"><option>底面</option></select></div>
          <div class="row"><label for="mode">切削模式</label><div class="iconsel w152"><select id="mode"><option>往复</option></select><svg><use href="#d-zig"/></svg></div></div>
          <div class="row"><label for="step">步距</label><select id="step" class="w152"><option>刀具平直百分比</option></select></div>
          <div class="row"><label for="n1">平面直径百分比</label><input id="n1" type="text" value="75.0000"></div>
          <div class="row"><label for="n2">底面毛坯厚度</label><input id="n2" type="text" value="3.0000"></div>
          <div class="row"><label for="n3">每刀切削深度</label><input id="n3" type="text" value="0.0000"></div>
          <div class="row"><label for="n4">Z 向深度偏置</label><input id="n4" type="text" value="0.0000"></div>
          <div class="row"><span>切削参数</span><button type="button" class="ib" aria-label="切削参数"><svg><use href="#d-cut"/></svg></button></div>
          <div class="row"><span>非切削移动</span><button type="button" class="ib" aria-label="非切削移动"><svg><use href="#d-noncut"/></svg></button></div>
          <div class="row"><span>进给率和速度</span><button type="button" class="ib" aria-label="进给率和速度"><svg><use href="#d-feed"/></svg></button></div>
        </section>
        <section><h3>机床控制<svg class="chev"><use href="#down"/></svg></h3></section>
        <section><h3>程序<svg class="chev"><use href="#down"/></svg></h3></section>
        <section><h3>描述<svg class="chev"><use href="#down"/></svg></h3></section>
        <section><h3>选项<svg class="chev"><use href="#down"/></svg></h3></section>
        <section class="open">
          <h3>操作<svg class="chev"><use href="#up"/></svg></h3>
          <div class="ops"><button type="button" class="ib" aria-label="生成"><svg><use href="#d-gen"/></svg></button><button type="button" class="ib focus" aria-label="重播"><svg><use href="#d-replay"/></svg></button><button type="button" class="ib" aria-label="确认"><svg><use href="#d-verify"/></svg></button><button type="button" class="ib" aria-label="列表"><svg><use href="#d-list"/></svg></button></div>
        </section>
        <section><h3>预览<svg class="chev"><use href="#down"/></svg></h3></section>
        <button type="button" class="collapse" aria-label="收起"><i></i></button>
        <div class="actions"><button type="button" class="primary">确定</button><button type="button">取消</button></div>
      </div>
    </form>
  </div>
  <div class="taskbar"></div>
</div>
</body>
</html>
```

FILE: styles.css
```css
* { box-sizing: border-box; }
html, body { height: 100%; }
body { margin: 0; font: 15px/20px "Open Sans", "Noto Sans CJK SC", sans-serif; color: #1e1e1e; background: #fff; }
button, input, select { font: inherit; color: inherit; margin: 0; }
button { border: 0; padding: 0; background: none; }
h1, h2, h3 { margin: 0; font-weight: 400; }
a { color: inherit; text-decoration: none; }
svg { display: block; width: 16px; height: 16px; flex: none; }
.sprite { position: absolute; width: 0; height: 0; }
.s12 { width: 12px; height: 12px; }
.s13 { width: 13px; height: 13px; }
.s14 { width: 14px; height: 14px; }
.dd { display: block; flex: none; width: 6px; height: 4px; background: #1e1e1e; clip-path: polygon(0 0, 100% 0, 50% 100%); }
.dd.bar { height: 7px; clip-path: polygon(0 0, 100% 0, 100% 1px, 0 1px, 0 3px, 100% 3px, 50% 100%, 0 3px); }

.app { display: flex; flex-direction: column; height: 100vh; overflow: hidden; }

/* title bar */
.titlebar { display: grid; grid-template-columns: 1fr auto 1fr; height: 30px; align-items: center; }
.logo { grid-column: 1; grid-row: 1; padding-left: 4px; font-size: 23px; font-weight: 700; line-height: 30px; color: #8c9dac; }
.quick { grid-column: 1; grid-row: 1; display: flex; margin-left: 47px; height: 22px; }
.q { display: flex; align-items: center; gap: 9px; padding: 0 8px; border-left: 1px solid #d4d4d4; }
.q svg { width: 15px; height: 15px; }
.q.three { gap: 8px; padding: 0 7px; }
.q.win { gap: 4px; padding-left: 7px; font-size: 14px; color: #000; }
.q.win .dd { margin-left: 1px; margin-right: 3px; }
h1 { grid-column: 2; grid-row: 1; font-size: 15px; line-height: 30px; color: #000; margin-left: 168px; }
.wincontrols { grid-column: 3; grid-row: 1; display: flex; justify-content: flex-end; align-items: center; gap: 18px; padding-right: 11px; color: #555; }
.brand { color: #009999; font-size: 15px; font-weight: 700; margin-right: 14px; }
.min { width: 9px; height: 12px; border-bottom: 2px solid currentColor; }

/* ribbon tabs */
.tabs { display: flex; height: 32px; background: #c8d7d6; font-size: 16px; line-height: 32px; }
.tabs a { padding: 0 13px; }
.tabs a.file { width: 91px; padding: 0; margin-right: 2px; text-align: center; background: #5b8880; color: #fff; line-height: 30px; }
.tabs a.on { background: #fff; color: #2a87b8; border-top: 1px solid #9aa3a2; line-height: 31px; }
.tabright { display: flex; align-items: center; margin-left: auto; gap: 11px; padding-right: 12px; }
.find { display: flex; align-items: center; width: 157px; height: 24px; padding: 0 4px 0 2px; background: #fff; border: 1px solid #a6a6a6; }
.find input { min-width: 0; flex: 1; border: 0; padding: 0; background: none; font-size: 14px; outline: 0; }
.find input::placeholder { color: #aaa; }
.tut { display: flex; align-items: center; gap: 4px; font-size: 14px; }
.tabright .s13 { margin-left: 4px; }
.dim { color: #999; }

/* ribbon */
.ribbon { display: flex; height: 106px; padding: 5px 0 4px; border-bottom: 1px solid #dcdcdc; font-size: 14px; }
.group { display: flex; flex-direction: column; border-right: 1px solid #dcdcdc; flex: none; }
.tools { display: flex; flex: 1; min-height: 0; }
.big { display: flex; flex-direction: column; align-items: center; min-width: 42px; padding: 0 4px; line-height: 20px; white-space: nowrap; }
.big svg { width: 32px; height: 32px; margin-bottom: 5px; }
.big .dd { margin-top: 4px; }
.off, .col { color: #c3c3c3; }
.col { display: flex; flex-direction: column; gap: 6px; }
.col button { display: flex; align-items: center; gap: 4px; height: 20px; white-space: nowrap; }
.col .dd { margin-left: 4px; }
.foot { display: flex; align-items: center; height: 12px; line-height: 12px; color: #2a87b8; padding-right: 8px; }
.foot span { flex: 1; text-align: center; padding-left: 4px; }
.g1 { width: 153px; padding-left: 6px; }
.g2 { width: 251px; }
.g2 .tools { padding-left: 7px; }
.g3 { width: 393px; }
.g3 .tools { padding-left: 5px; }
.g4 { width: 144px; }
.g4 .tools { padding-left: 8px; }
.g4 .col { padding-left: 5px; }
.g5 { width: 167px; }
.g5 .tools { padding-left: 13px; }
.g5 .col:first-child { width: 92px; }
.g5 .icons { padding-left: 10px; }
.g6 { width: 153px; }
.g6 .tools { padding-left: 11px; }
.g7 { width: 73px; align-items: center; }
.first { padding-left: 5px; }
.more { margin: auto 6px 4px auto; }

/* selection toolbar */
.toolbar { display: flex; align-items: center; height: 36px; border-bottom: 2px solid #8a9597; font-size: 14px; }
.menubtn { display: flex; align-items: center; gap: 5px; padding-left: 10px; width: 98px; }
.menubtn u { text-underline-offset: 2px; }
.set { display: flex; align-items: center; height: 28px; border-left: 1px solid #dcdcdc; gap: 9px; padding: 0 12px; }
.set button { display: flex; align-items: center; gap: 8px; }
.s1 { width: 114px; }
.s2 { width: 64px; }
.s3 { width: 594px; padding: 0 11px; }
.s4 { width: 238px; }
.s4 button { gap: 7px; }
.toolbar .more { margin: 14px 6px 0 auto; }
select { appearance: none; border: 1px solid #a6a6a6; border-radius: 0; height: 28px; padding: 0 24px 0 5px; background: linear-gradient(to bottom right, #1e1e1e 50%, transparent 50%) right 8px center / 4px 4px no-repeat, linear-gradient(to bottom left, #1e1e1e 50%, transparent 50%) right 12px center / 4px 4px no-repeat, #fff; overflow: hidden; white-space: nowrap; }
.toolbar .tsel { width: 167px; height: 24px; padding: 0 18px 0 2px; color: #999; opacity: 1; flex: none; }
.toolbar .wide { width: 175px; }
.tsel:disabled { background: linear-gradient(to bottom right, #999 50%, transparent 50%) right 6px center / 4px 4px no-repeat, linear-gradient(to bottom left, #999 50%, transparent 50%) right 10px center / 4px 4px no-repeat, #fff; }

/* workspace */
.desk { position: relative; display: flex; flex-direction: column; flex: 1; min-height: 0; overflow: hidden; }
.workspace { display: flex; flex: 1; min-height: 0; }
.rail { display: flex; flex-direction: column; width: 32px; background: #dcdcdc; border-right: 1px solid #b0b0b0; flex: none; }
.rail button { display: flex; align-items: center; justify-content: center; height: 42px; padding-left: 4px; flex: none; }
.rail svg { width: 23px; height: 23px; }
.rail .cog { align-items: flex-start; padding: 6px 0 0; }
.rail .cog svg { width: 14px; height: 14px; }
.rail .on { margin: 0 -1px 0 2px; padding-left: 2px; background: #fff; border: 1px solid #b0b0b0; border-right: 0; }
.rail .gap { margin-top: 12px; }
.navigator { display: flex; flex-direction: column; width: 595px; padding: 0 9px 6px 6px; background: #fff; border-right: 1px solid #8a9597; flex: none; }
.navhead { display: flex; align-items: center; justify-content: space-between; height: 31px; padding: 3px 7px 0 5px; flex: none; }
h2 { font-size: 15px; line-height: 20px; }
.max { width: 14px; height: 13px; border: 1px solid #1e1e1e; border-top-width: 2px; }
.gridbox { display: flex; flex-direction: column; flex: 1; min-height: 0; border: 1px solid #d4d4d4; padding: 1px; }
.rows { flex: 1; min-height: 0; overflow: hidden; }
table { width: 100%; table-layout: fixed; border-spacing: 0; }
.c1 { width: 309px; }
.c2 { width: 100px; }
th, td { height: 24px; padding: 0; border-right: 1px solid #e8e8e8; border-bottom: 1px solid #e8e8e8; font-weight: 400; text-align: left; line-height: 23px; white-space: nowrap; }
th { padding-left: 6px; background: #efefef; border-color: #d0d0d0; }
th:last-child, td:last-child { border-right: 0; }
td:first-child { border-right-color: #000; }
tbody tr:nth-child(even) { background: #fafafa; }
.root { padding-left: 3px; }
.node { display: flex; align-items: center; height: 23px; }
.node .branch { width: 20px; height: 24px; fill: none; stroke: #999; stroke-dasharray: 1 1; }
.node span { padding-left: 3px; }
.node .warn { width: 8px; margin: 0 4px 0 3px; }
.sel td + td, .sel .node span { background: #3399ff; color: #fff; }
.sel .node span { flex: 1; }
.cutter { width: 8px; height: 14px; margin-left: 9px; }
.ok { width: 12px; height: 14px; margin-left: 6px; }
td.mill { padding-left: 5px; }
.hscroll { height: 21px; padding: 8px 0 0 21px; background: #efefef; flex: none; }
.hscroll i { display: block; width: 303px; height: 6px; background: #858585; }
.splitter { height: 5px; background: #d4d4d4; border: 1px solid #aaa; flex: none; }
.fold { display: flex; align-items: center; justify-content: space-between; height: 28px; padding: 0 6px 0 7px; border-bottom: 2px solid #d0d0d0; color: #2a87b8; font-size: 18px; flex: none; }
.chev { width: 15px; height: 11px; }
.viewport { flex: 1; min-width: 0; overflow: hidden; background: linear-gradient(#b3b4b6 0%, #d8d9da 50%, #e7e8e9 80%, #e8e9ea 100%); }
.scene { width: 100%; height: 100%; }
.axis { font: 14px "Liberation Sans", sans-serif; }
.status { display: flex; align-items: center; justify-content: space-between; height: 23px; padding: 0 16px 0 3px; border-top: 1px solid #a6a6a6; background: #fff; font-size: 14px; font-weight: 500; color: #000; flex: none; }
.mark { display: grid; align-items: center; color: #999; font: 15px/20px Roboto, sans-serif; white-space: nowrap; padding-top: 3px; }
.mark svg { grid-area: 1 / 1; justify-self: end; margin: -8px 39px 0 0; }
.taskbar { height: 9px; background: #e3eef9; border-top: 1px solid #b9c2ca; flex: none; }

/* floating operation dialog */
.dialog { position: absolute; top: 46px; right: 179px; width: 380px; background: #e6e6e6; border: 1px solid #b4b4b4; border-width: 0 1px; box-shadow: 0 0 2px #bbb; }
.dialog header { display: flex; align-items: center; height: 27px; margin: 0 -1px; padding: 0 11px 0 10px; background: #5b8880; color: #fff; }
.dialog h2 { flex: 1; font-size: 16px; margin-left: 10px; }
.body { padding: 4px 5px 0; }
.body section { background: #fff; border-bottom: 1px solid #c4c4c4; margin-bottom: 3px; }
.open { display: flex; flex-direction: column; gap: 2px; padding: 0 9px 8px; }
h3 { display: flex; align-items: center; justify-content: space-between; height: 27px; padding: 0 6px 0 7px; font-size: 18px; color: #2a87b8; }
.open h3 { margin: 0 -9px 5px; }
.row { display: flex; align-items: center; gap: 2px; }
.row label, .row > span { margin-right: auto; line-height: 22px; }
.row.top { align-items: flex-start; }
.top label { line-height: 28px; }
.row.low { align-items: flex-end; }
.ib { display: grid; place-items: center; width: 32px; height: 32px; border: 1px solid #a6a6a6; background: #fff; }
.ib svg { width: 23px; height: 23px; }
.ib:disabled { border-color: #d0d0d0; }
.ib:disabled svg { opacity: .45; filter: grayscale(.8); }
.w131 { width: 131px; }
.w152 { width: 152px; }
.iconsel { display: grid; align-items: center; }
.iconsel select { grid-area: 1 / 1; padding-left: 24px; }
.iconsel svg { grid-area: 1 / 1; width: 14px; height: 12px; margin-left: 6px; }
.row input { width: 90px; height: 26px; padding: 0 4px; border: 1px solid #a6a6a6; text-align: right; font: 17px "Liberation Mono", monospace; }
.check { display: flex; align-items: center; gap: 5px; height: 24px; }
.check input { appearance: none; width: 18px; height: 18px; border: 1px solid #555; border-radius: 3px; background: #f3f3f3; }
.sub { display: flex; align-items: center; justify-content: space-between; height: 27px; padding: 0 7px 0 8px; border: 1px solid #d4dada; background: #f0f6f6; color: #2a87b8; }
.sub .chev { width: 12px; height: 9px; }
.ops { display: flex; justify-content: center; gap: 2px; }
.focus { outline: 1px dotted #333; outline-offset: -4px; }
.collapse { display: flex; align-items: center; justify-content: center; width: 100%; height: 14px; border-bottom: 1px solid #d0d0d0; }
.collapse i { width: 9px; height: 5px; background: #1e1e1e; clip-path: polygon(50% 0, 100% 100%, 0 100%); }
.actions { display: flex; justify-content: flex-end; gap: 5px; padding: 8px 10px 0; }
.actions button { width: 60px; height: 28px; background: #c9c9ce; border: 1px solid #aaa; }
.actions .primary { background: #9acbe6; border-color: #4a9cc8; }
```
